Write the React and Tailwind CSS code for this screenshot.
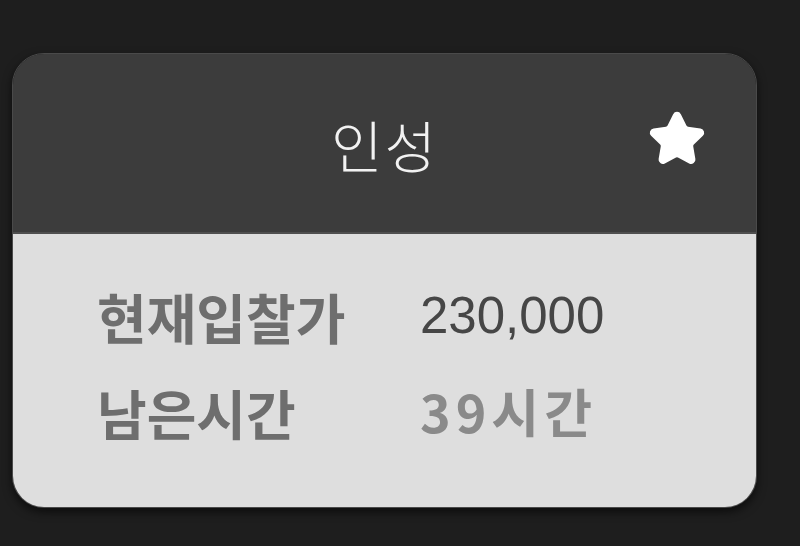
import React from "react";
import { Star } from "lucide-react";

const kr = { fontFamily: '"Noto Sans CJK KR", "Noto Sans", sans-serif' };

export default function App() {
  return (
    <div className="w-[800px] h-[546px] bg-[#1e1e1e] pt-[53px] pl-[12px] overflow-hidden" style={kr}>
      {/* auction card */}
      <div className="w-[745px] h-[455px] rounded-[32px] overflow-hidden flex flex-col border border-[#4a4a4a] shadow-[0_4px_10px_rgba(0,0,0,0.6)]">
        <div className="relative h-[180px] bg-[#3c3c3c] flex items-center justify-center border-b-2 border-[#4f4f4f]">
          <span className="text-[56px] font-light text-[#f2f2f2] leading-none tracking-[2px] mt-[2px]">인성</span>
          <Star
            className="absolute right-[50px] top-[56px] text-white"
            size={58}
            fill="white"
            strokeWidth={2.5}
            strokeLinejoin="round"
          />
        </div>
        <div className="flex-1 bg-[#dedede] pl-[84px] pt-[54px] flex flex-col gap-[38px]">
          <div className="flex items-center h-[58px]">
            <span className="w-[323px] text-[54px] font-bold text-[#6e6e6e] leading-none">현재입찰가</span>
            <span className="text-[51px] text-[#464646] leading-none -mt-[4px]" style={{ fontFamily: '"Liberation Sans", sans-serif' }}>230,000</span>
          </div>
          <div className="flex items-center h-[58px]">
            <span className="w-[323px] text-[54px] font-bold text-[#6e6e6e] leading-none">남은시간</span>
            <span className="text-[52px] font-bold text-[#8a8a8a] leading-none tracking-[5px] -mt-[4px]">39시간</span>
          </div>
        </div>
      </div>
    </div>
  );
}
